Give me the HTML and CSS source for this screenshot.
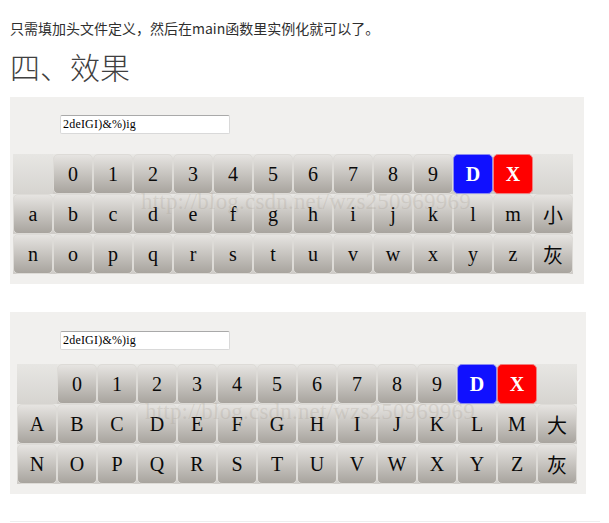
FILE: index.html
```html
<!DOCTYPE html>
<html lang="zh">
<head>
<meta charset="utf-8">
<link rel="stylesheet" href="styles.css">
</head>
<body>
<div class="article">
  <p class="intro">只需填加头文件定义，然后在main函数里实例化就可以了。</p>
  <h2 class="heading">四、效果</h2>

  <div class="panel panel-one">
    <div class="field">2deIGI)&amp;%)ig</div>
    <div class="keyboard">
      <div class="row">
        <span class="blank"></span>
        <span class="key">0</span><span class="key">1</span><span class="key">2</span><span class="key">3</span><span class="key">4</span><span class="key">5</span><span class="key">6</span><span class="key">7</span><span class="key">8</span><span class="key">9</span>
        <span class="key del">D</span><span class="key close">X</span>
        <span class="blank"></span>
      </div>
      <div class="row">
        <span class="key">a</span><span class="key">b</span><span class="key">c</span><span class="key">d</span><span class="key">e</span><span class="key">f</span><span class="key">g</span><span class="key">h</span><span class="key">i</span><span class="key">j</span><span class="key">k</span><span class="key">l</span><span class="key">m</span><span class="key cjk">小</span>
      </div>
      <div class="row">
        <span class="key">n</span><span class="key">o</span><span class="key">p</span><span class="key">q</span><span class="key">r</span><span class="key">s</span><span class="key">t</span><span class="key">u</span><span class="key">v</span><span class="key">w</span><span class="key">x</span><span class="key">y</span><span class="key">z</span><span class="key cjk">灰</span>
      </div>
      <div class="watermark">http://blog.csdn.net/wzs250969969</div>
    </div>
  </div>

  <div class="panel panel-two">
    <div class="field">2deIGI)&amp;%)ig</div>
    <div class="keyboard">
      <div class="row">
        <span class="blank"></span>
        <span class="key">0</span><span class="key">1</span><span class="key">2</span><span class="key">3</span><span class="key">4</span><span class="key">5</span><span class="key">6</span><span class="key">7</span><span class="key">8</span><span class="key">9</span>
        <span class="key del">D</span><span class="key close">X</span>
        <span class="blank"></span>
      </div>
      <div class="row">
        <span class="key">A</span><span class="key">B</span><span class="key">C</span><span class="key">D</span><span class="key">E</span><span class="key">F</span><span class="key">G</span><span class="key">H</span><span class="key">I</span><span class="key">J</span><span class="key">K</span><span class="key">L</span><span class="key">M</span><span class="key cjk">大</span>
      </div>
      <div class="row">
        <span class="key">N</span><span class="key">O</span><span class="key">P</span><span class="key">Q</span><span class="key">R</span><span class="key">S</span><span class="key">T</span><span class="key">U</span><span class="key">V</span><span class="key">W</span><span class="key">X</span><span class="key">Y</span><span class="key">Z</span><span class="key cjk">灰</span>
      </div>
      <div class="watermark">http://blog.csdn.net/wzs250969969</div>
    </div>
  </div>

  <div class="rule"></div>
</div>
</body>
</html>
```

FILE: styles.css
```css
html, body {
  margin: 0;
  padding: 0;
  background: #ffffff;
}

body {
  font-family: "Noto Sans CJK SC", "Noto Sans", sans-serif;
  color: #333333;
}

.article {
  padding: 18px 0 0 10px;
}

.intro {
  margin: 0;
  font-size: 14px;
  line-height: 20px;
  color: #2f2f2f;
}

.heading {
  margin: 8px 0 0 0;
  font-size: 30px;
  line-height: 40px;
  font-weight: 300;
  color: #404040;
}

.panel {
  background: #f1f0ee;
  padding-bottom: 10px;
}

.panel-one {
  width: 574px;
  margin-top: 11px;
  padding-top: 18px;
}

.panel-two {
  width: 576px;
  margin-top: 28px;
  padding-top: 19px;
}

.field {
  box-sizing: border-box;
  width: 170px;
  height: 19px;
  margin-left: 50px;
  background: #ffffff;
  border: 1px solid #d9d9d9;
  border-top-color: #a9a9a9;
  border-radius: 2px;
  padding-left: 2px;
  font-family: "Liberation Serif", serif;
  font-size: 12px;
  letter-spacing: 0.2px;
  line-height: 17px;
  color: #000000;
}

.keyboard {
  position: relative;
  width: 560px;
  display: flex;
  flex-direction: column;
}

.panel-one .keyboard {
  margin: 20px 0 0 3px;
}

.panel-two .keyboard {
  margin: 14px 0 0 7px;
}

.row {
  display: flex;
  height: 40px;
  background: linear-gradient(#e9e8e5, #cfccc8);
}

.blank {
  width: 40px;
  height: 40px;
  background: linear-gradient(#e7e6e3, #d6d4d0);
}

.key {
  box-sizing: border-box;
  width: 40px;
  height: 40px;
  border: 1px solid #dddbd7;
  border-radius: 5px;
  background: linear-gradient(#e6e4e1, #a8a49e);
  display: flex;
  align-items: center;
  justify-content: center;
  font-family: "Liberation Serif", "Noto Sans CJK SC", serif;
  font-size: 20px;
  color: #0a0a0a;
}

.key.cjk {
  font-family: "Noto Sans CJK SC", sans-serif;
  font-size: 20px;
  font-weight: normal;
}

.key.del {
  background: #1010ff;
  border-color: #8c8cf0;
  color: #ffffff;
  font-weight: bold;
}

.key.close {
  background: #ff0000;
  border-color: #f08080;
  color: #ffffff;
  font-weight: bold;
}

.watermark {
  position: absolute;
  left: 128px;
  top: 35px;
  font-family: "Liberation Serif", serif;
  font-size: 23px;
  letter-spacing: 0.2px;
  line-height: 26px;
  color: rgba(150, 140, 125, 0.2);
  white-space: nowrap;
  pointer-events: none;
}

.rule {
  width: 590px;
  margin-top: 27px;
  border-top: 1px solid #eeeeee;
}
```
